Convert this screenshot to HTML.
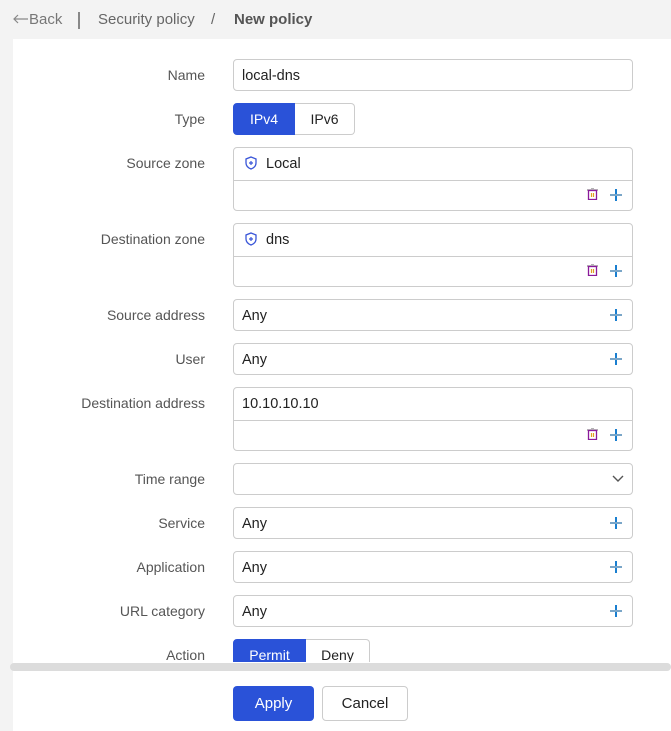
<!DOCTYPE html>
<html><head><style>
*{box-sizing:border-box;margin:0;padding:0}
body{width:671px;height:731px;background:#f3f3f3;font-family:"Liberation Sans",sans-serif;font-size:14px;color:#222;position:relative;overflow:hidden}
.a{position:absolute}
.panel{left:13px;top:39px;width:658px;height:692px;background:#fff}
.lbl{position:absolute;right:466px;color:#555;font-size:14px;text-align:right;white-space:nowrap}
.box{position:absolute;left:233px;width:400px;border:1px solid #ccc;border-radius:4px;background:#fff}
.box .t{position:absolute;left:8px;top:8px;font-size:14.5px}
.div{position:absolute;left:0;right:0;height:1px;background:#ccc}
.plus{position:absolute;right:10px;width:12px;height:12px}
.plus:before{content:"";position:absolute;left:5px;top:0;width:1.5px;height:12px;background:#1a7fd0}
.plus:after{content:"";position:absolute;left:0;top:5px;width:12px;height:1.5px;background:#7aa6c8}
.trash{position:absolute;right:34px;width:11px;height:12px}
.seg{position:absolute;height:32px;line-height:31px;text-align:center;font-size:14px;border:1px solid #ccc}
.on{background:#2a52d8;color:#fff;border-color:#2a52d8}
</style></head><body>
<svg class="a" style="left:13px;top:14px" width="15" height="10" viewBox="0 0 15 10"><path d="M15 5H1M5 1L1 5l4 4" fill="none" stroke="#888" stroke-width="1.2"/></svg>
<div class="a" style="left:29px;top:11px;color:#777;font-size:15px">Back</div>
<div class="a" style="left:78px;top:12px;width:1.5px;height:17px;background:#888"></div>
<div class="a" style="left:98px;top:11px;color:#666;font-size:15px">Security policy</div>
<div class="a" style="left:211px;top:11px;color:#666;font-size:15px">/</div>
<div class="a" style="left:234px;top:11px;color:#555;font-size:15px;font-weight:bold">New policy</div>
<div class="a panel"></div>

<div class="lbl" style="top:67px">Name</div>
<div class="box" style="top:59px;height:32px"><span class="t">local-dns</span></div>

<div class="lbl" style="top:111px">Type</div>
<div class="seg on" style="left:233px;top:103px;width:62px;border-radius:4px 0 0 4px">IPv4</div>
<div class="seg" style="left:295px;top:103px;width:60px;border-left:none;border-radius:0 4px 4px 0">IPv6</div>

<div class="lbl" style="top:155px">Source zone</div>
<div class="box" style="top:147px;height:64px">
<svg class="a" style="left:10px;top:8px" width="14" height="14" viewBox="0 0 14 14"><path d="M7 1L12 3v4c0 3-2.5 5-5 6C4.5 12 2 10 2 7V3z" fill="none" stroke="#3a56d8" stroke-width="1.3"/><path d="M7 5v4M5 7h4" stroke="#3a56d8" stroke-width="1.2"/></svg>
<span class="t" style="left:32px">Local</span>
<div class="div" style="top:32px"></div>
<svg class="trash" style="top:40px" viewBox="0 0 11 12"><path d="M0 2h11M4 0h3" stroke="#888" stroke-width="1.2"/><rect x="1.5" y="2.5" width="8" height="9" fill="none" stroke="#8a1a9a" stroke-width="1.3"/><path d="M4.5 5v4M6.5 5v4" stroke="#e0a020" stroke-width="1.2"/></svg>
<div class="plus" style="top:41px"></div></div>

<div class="lbl" style="top:231px">Destination zone</div>
<div class="box" style="top:223px;height:64px">
<svg class="a" style="left:10px;top:8px" width="14" height="14" viewBox="0 0 14 14"><path d="M7 1L12 3v4c0 3-2.5 5-5 6C4.5 12 2 10 2 7V3z" fill="none" stroke="#3a56d8" stroke-width="1.3"/><path d="M7 5v4M5 7h4" stroke="#3a56d8" stroke-width="1.2"/></svg>
<span class="t" style="left:32px">dns</span>
<div class="div" style="top:32px"></div>
<svg class="trash" style="top:40px" viewBox="0 0 11 12"><path d="M0 2h11M4 0h3" stroke="#888" stroke-width="1.2"/><rect x="1.5" y="2.5" width="8" height="9" fill="none" stroke="#8a1a9a" stroke-width="1.3"/><path d="M4.5 5v4M6.5 5v4" stroke="#e0a020" stroke-width="1.2"/></svg>
<div class="plus" style="top:41px"></div></div>

<div class="lbl" style="top:307px">Source address</div>
<div class="box" style="top:299px;height:32px"><span class="t">Any</span><div class="plus" style="top:9px"></div></div>

<div class="lbl" style="top:351px">User</div>
<div class="box" style="top:343px;height:32px"><span class="t">Any</span><div class="plus" style="top:9px"></div></div>

<div class="lbl" style="top:395px">Destination address</div>
<div class="box" style="top:387px;height:64px"><span class="t">10.10.10.10</span>
<div class="div" style="top:32px"></div>
<svg class="trash" style="top:40px" viewBox="0 0 11 12"><path d="M0 2h11M4 0h3" stroke="#888" stroke-width="1.2"/><rect x="1.5" y="2.5" width="8" height="9" fill="none" stroke="#8a1a9a" stroke-width="1.3"/><path d="M4.5 5v4M6.5 5v4" stroke="#e0a020" stroke-width="1.2"/></svg>
<div class="plus" style="top:41px"></div></div>

<div class="lbl" style="top:471px">Time range</div>
<div class="box" style="top:463px;height:32px"><svg class="a" style="right:8px;top:11px" width="12" height="8" viewBox="0 0 12 8"><path d="M1 1l5 5 5-5" fill="none" stroke="#555" stroke-width="1.4"/></svg></div>

<div class="lbl" style="top:515px">Service</div>
<div class="box" style="top:507px;height:32px"><span class="t">Any</span><div class="plus" style="top:9px"></div></div>

<div class="lbl" style="top:559px">Application</div>
<div class="box" style="top:551px;height:32px"><span class="t">Any</span><div class="plus" style="top:9px"></div></div>

<div class="lbl" style="top:603px">URL category</div>
<div class="box" style="top:595px;height:32px"><span class="t">Any</span><div class="plus" style="top:9px"></div></div>

<div class="lbl" style="top:647px">Action</div>
<div class="seg on" style="left:233px;top:639px;width:73px;border-radius:4px 0 0 0">Permit</div>
<div class="seg" style="left:306px;top:639px;width:64px;border-left:none;border-radius:0 4px 0 0">Deny</div>

<div class="a" style="left:13px;top:662px;width:658px;height:69px;background:#fff"></div>
<div class="a" style="left:10px;top:663px;width:661px;height:8px;background:#dcdcdc;border-radius:4px"></div>

<div class="a" style="left:233px;top:686px;width:81px;height:35px;background:#2a52d8;color:#fff;border-radius:4px;text-align:center;line-height:36px;font-size:15px">Apply</div>
<div class="a" style="left:322px;top:686px;width:86px;height:35px;border:1px solid #ccc;border-radius:4px;text-align:center;line-height:34px;font-size:15px">Cancel</div>
</body></html>
